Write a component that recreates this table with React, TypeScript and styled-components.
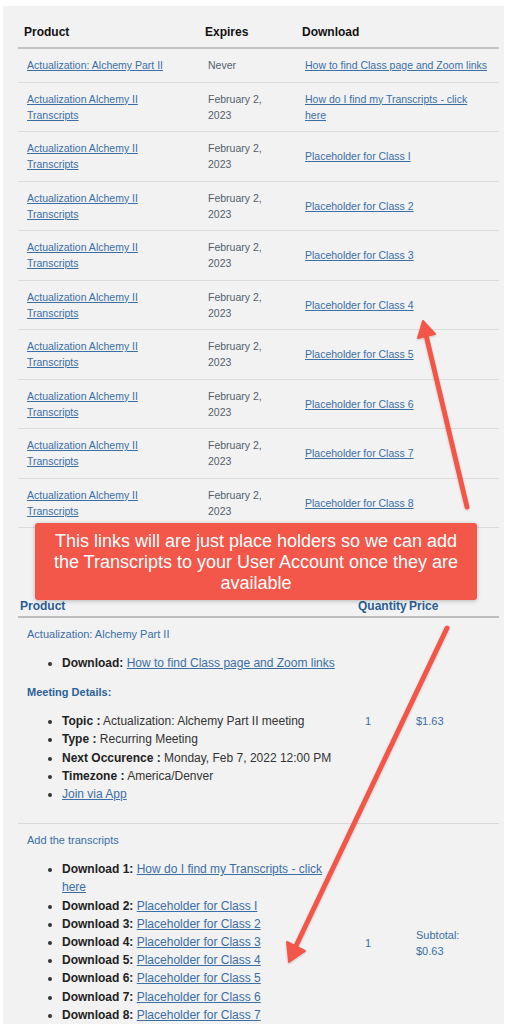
import React from 'react';
import styled, { createGlobalStyle } from 'styled-components';

const BLUE = '#3b6ea5';
const RED = '#f2574a';

const GlobalStyle = createGlobalStyle`
  html, body { margin: 0; padding: 0; background: #fff; }
  body { font-family: "Liberation Sans", Arial, Helvetica, sans-serif; }
`;

const Root = styled.div`
  position: relative;
  width: 510px;
  height: 1024px;
  overflow: hidden;
`;

const Panel = styled.div`
  margin: 6px 6px 0 3px;
  padding: 11px 5px 0 15px;
  background: #f2f2f2;
  height: 1018px;
  box-sizing: border-box;
`;

const Table = styled.table<{ $mt?: number }>`
  width: 481px;
  border-collapse: collapse;
  table-layout: fixed;
  margin-top: ${p => p.$mt ?? 0}px;
`;

const Col = styled.col<{ $w: number }>`
  width: ${p => p.$w}px;
`;

const HeadCell = styled.th`
  text-align: left;
  padding: 8px 6px;
  font-size: 12px;
  line-height: 14px;
  font-weight: bold;
  color: #111;
  border-bottom: 2px solid #c4c4c4;
`;

const Row = styled.tr`
  border-bottom: 1px solid #dcdcdc;
`;

const Cell = styled.td<{ $pr: number }>`
  padding: 8px ${p => p.$pr}px 8.5px 9px;
  font-size: 10.5px;
  line-height: 16px;
  color: #52606c;
  vertical-align: middle;
`;

const Link = styled.a`
  color: ${BLUE};
  text-decoration: underline;
  cursor: pointer;
`;

const OrderHead = styled.th`
  text-align: left;
  padding: 5px 2px 3px;
  font-size: 12px;
  line-height: 14px;
  font-weight: bold;
  color: #2c5d93;
  border-bottom: 2px solid #bdbdbd;
  white-space: nowrap;
`;

const OrderRow = styled.tr`
  border-bottom: 1px solid #d8d8d8;
`;

const OrderCell = styled.td<{ $pr: number }>`
  padding: 8px ${p => p.$pr}px 8px 9px;
  font-size: 11px;
  line-height: 16px;
  color: ${BLUE};
  vertical-align: middle;
`;

const ItemName = styled.div`
  color: ${BLUE};
`;

const SectionTitle = styled.div`
  color: #2c6098;
  font-weight: bold;
`;

const Bullets = styled.ul`
  margin: 12px 0;
  padding-left: 35px;
  font-size: 12px;
  line-height: 18.2px;
  color: #333;
`;

const Label = styled.b`
  color: #222;
`;

const Callout = styled.div`
  position: absolute;
  left: 35px;
  top: 523px;
  width: 442px;
  height: 77px;
  box-sizing: border-box;
  padding: 8px 12px;
  background: ${RED};
  color: #fff;
  font-size: 18px;
  line-height: 21px;
  text-align: center;
  border-radius: 3px;
  box-shadow: 0 1px 4px rgba(0, 0, 0, 0.25);
`;

const Overlay = styled.svg`
  position: absolute;
  left: 0;
  top: 0;
  width: 510px;
  height: 1024px;
  pointer-events: none;
`;

const rows = [
  { product: 'Actualization: Alchemy Part II', expires: 'Never', link: 'How to find Class page and Zoom links' },
  { product: 'Actualization Alchemy II Transcripts', expires: 'February 2, 2023', link: 'How do I find my Transcripts - click here' },
  ...['I', '2', '3', '4', '5', '6', '7', '8'].map(n => ({
    product: 'Actualization Alchemy II Transcripts',
    expires: 'February 2, 2023',
    link: `Placeholder for Class ${n}`,
  })),
];

const meeting = [
  ['Topic :', 'Actualization: Alchemy Part II meeting'],
  ['Type :', 'Recurring Meeting'],
  ['Next Occurence :', 'Monday, Feb 7, 2022 12:00 PM'],
  ['Timezone :', 'America/Denver'],
];

const downloads = [
  'How do I find my Transcripts - click here',
  'Placeholder for Class I',
  'Placeholder for Class 2',
  'Placeholder for Class 3',
  'Placeholder for Class 4',
  'Placeholder for Class 5',
  'Placeholder for Class 6',
  'Placeholder for Class 7',
  'Placeholder for Class 8',
];

export default function App() {
  return (
    <Root>
      <GlobalStyle />
      <Panel>
        <Table>
          <colgroup>
            <Col $w={181} />
            <Col $w={97} />
            <Col $w={203} />
          </colgroup>
          <thead>
            <tr>
              <HeadCell>Product</HeadCell>
              <HeadCell>Expires</HeadCell>
              <HeadCell>Download</HeadCell>
            </tr>
          </thead>
          <tbody>
            {rows.map((r, i) => (
              <Row key={i}>
                <Cell $pr={20}><Link>{r.product}</Link></Cell>
                <Cell $pr={20}>{r.expires}</Cell>
                <Cell $pr={10}><Link>{r.link}</Link></Cell>
              </Row>
            ))}
          </tbody>
        </Table>

        <Table $mt={66}>
          <colgroup>
            <Col $w={338} />
            <Col $w={51} />
            <Col $w={92} />
          </colgroup>
          <thead>
            <tr>
              <OrderHead>Product</OrderHead>
              <OrderHead>Quantity</OrderHead>
              <OrderHead>Price</OrderHead>
            </tr>
          </thead>
          <tbody>
            <OrderRow>
              <OrderCell $pr={13}>
                <ItemName>Actualization: Alchemy Part II</ItemName>
                <Bullets>
                  <li><Label>Download:</Label> <Link>How to find Class page and Zoom links</Link></li>
                </Bullets>
                <SectionTitle>Meeting Details:</SectionTitle>
                <Bullets>
                  {meeting.map(([k, v]) => (
                    <li key={k}><Label>{k}</Label> {v}</li>
                  ))}
                  <li><Link>Join via App</Link></li>
                </Bullets>
              </OrderCell>
              <OrderCell $pr={0}>1</OrderCell>
              <OrderCell $pr={20}>$1.63</OrderCell>
            </OrderRow>
            <OrderRow>
              <OrderCell $pr={13}>
                <ItemName>Add the transcripts</ItemName>
                <Bullets>
                  {downloads.map((d, i) => (
                    <li key={i}><Label>Download {i + 1}:</Label> <Link>{d}</Link></li>
                  ))}
                </Bullets>
              </OrderCell>
              <OrderCell $pr={0}>1</OrderCell>
              <OrderCell $pr={20}>Subtotal: $0.63</OrderCell>
            </OrderRow>
          </tbody>
        </Table>
      </Panel>

      <Callout>
        This links will are just place holders so we can add the Transcripts to your User Account once they are available
      </Callout>

      <Overlay viewBox="0 0 510 1024">
        <defs>
          <filter id="sh" x="-20%" y="-20%" width="140%" height="140%">
            <feDropShadow dx="0" dy="1" stdDeviation="1" floodColor="#000" floodOpacity="0.2" />
          </filter>
        </defs>
        <g filter="url(#sh)" fill={RED} stroke={RED} strokeLinecap="round" strokeLinejoin="round">
          <line x1="467" y1="507" x2="426" y2="335" strokeWidth="5" />
          <polygon points="423,321 435,334 418,338" strokeWidth="2" />
          <line x1="447" y1="628" x2="296" y2="946" strokeWidth="5" />
          <polygon points="289,962 305,951 287,942" strokeWidth="2" />
        </g>
      </Overlay>
    </Root>
  );
}
